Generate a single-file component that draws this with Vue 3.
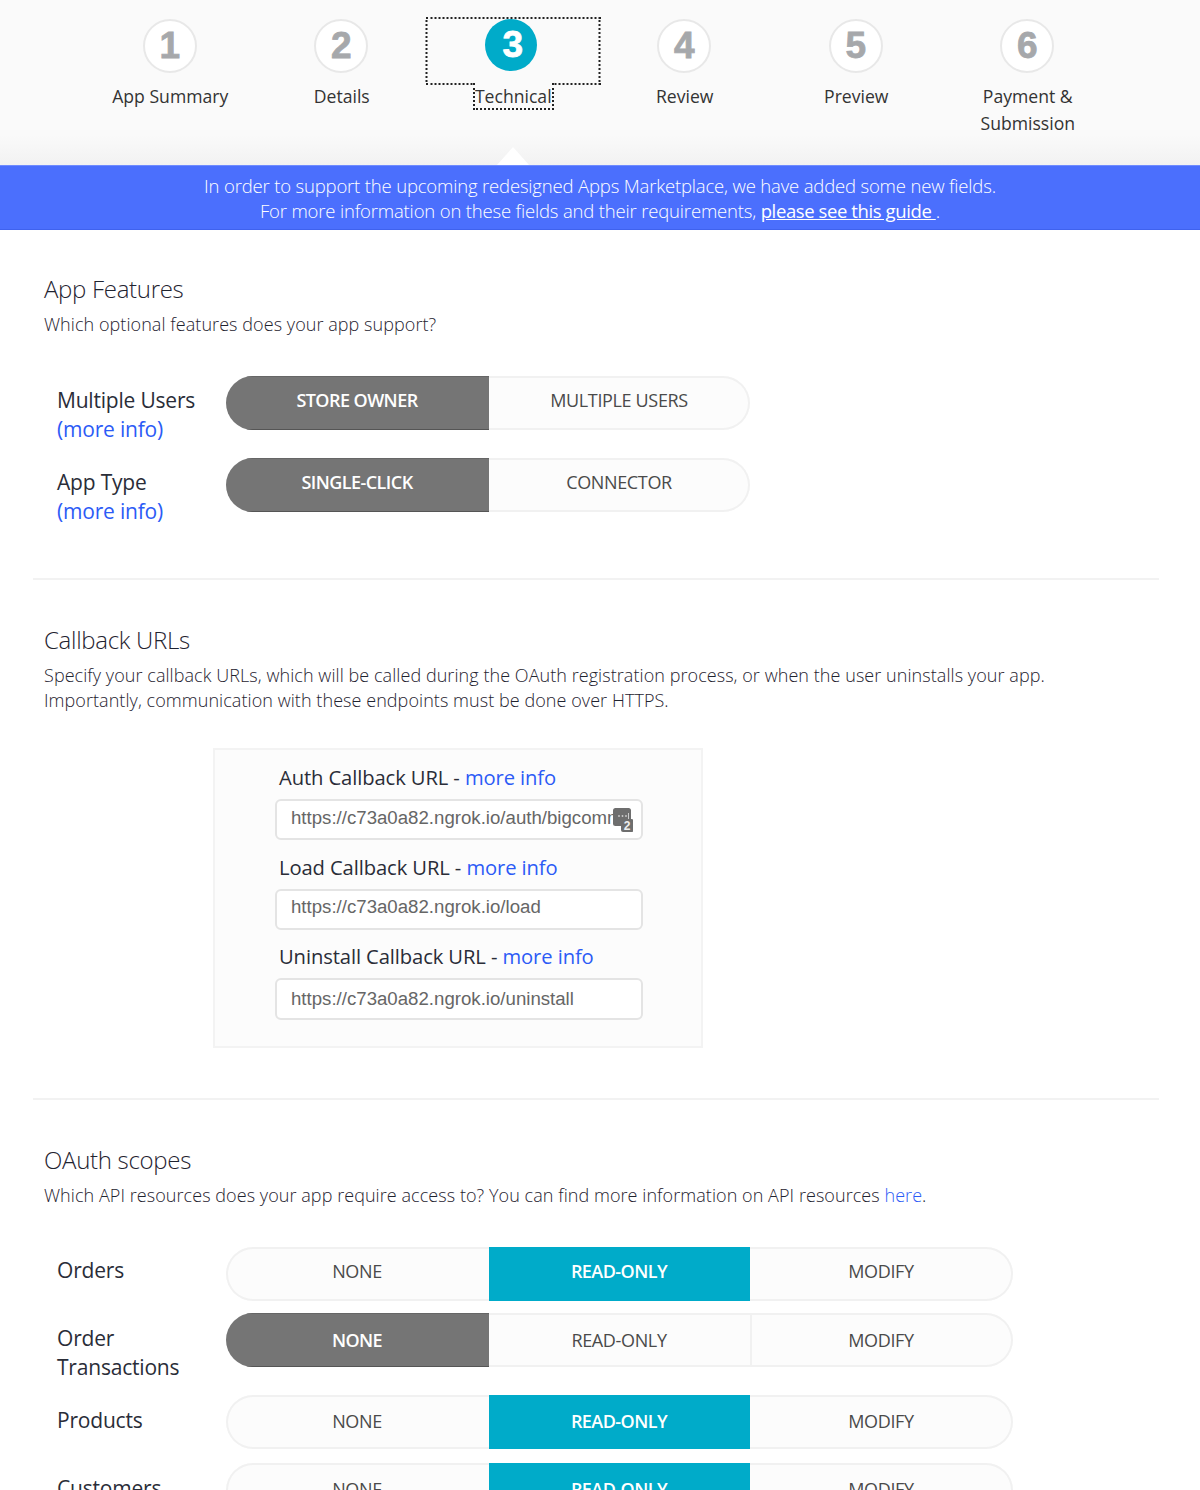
<script setup>
const steps = [
  { n: 1, label: 'App Summary' },
  { n: 2, label: 'Details' },
  { n: 3, label: 'Technical', active: true },
  { n: 4, label: 'Review' },
  { n: 5, label: 'Preview' },
  { n: 6, label: 'Payment & Submission' },
]
const features = [
  { label: 'Multiple Users', options: ['STORE OWNER', 'MULTIPLE USERS'], selected: 0, tone: 'grey' },
  { label: 'App Type', options: ['SINGLE-CLICK', 'CONNECTOR'], selected: 0, tone: 'grey' },
]
const scopeOptions = ['NONE', 'READ-ONLY', 'MODIFY']
const scopes = [
  { label: 'Orders', options: scopeOptions, selected: 1, tone: 'cyan', tight: true },
  { label: 'Order Transactions', options: scopeOptions, selected: 0, tone: 'grey', low: true },
  { label: 'Products', options: scopeOptions, selected: 1, tone: 'cyan' },
  { label: 'Customers', options: scopeOptions, selected: 1, tone: 'cyan' },
]
const urls = [
  { label: 'Auth Callback URL', value: 'https://c73a0a82.ngrok.io/auth/bigcommerce', icon: true },
  { label: 'Load Callback URL', value: 'https://c73a0a82.ngrok.io/load' },
  { label: 'Uninstall Callback URL', value: 'https://c73a0a82.ngrok.io/uninstall' },
]
</script>

<template>
  <div class="page">
    <header class="stepper">
      <div v-for="s in steps" :key="s.n" class="step" :class="{ active: s.active }">
        <div class="badge-zone">
          <span class="circle">{{ s.n }}</span>
        </div>
        <span class="step-label">{{ s.label }}</span>
      </div>
      <span class="notch"></span>
    </header>

    <div class="banner">
      <p>In order to support the upcoming redesigned Apps Marketplace, we have added some new fields.</p>
      <p>For more information on these fields and their requirements, <a class="guide">please see this guide </a>.</p>
    </div>

    <section class="section features">
      <h2>App Features</h2>
      <p class="desc">Which optional features does your app support?</p>
      <div class="rows">
        <div v-for="r in features" :key="r.label" class="row">
          <div class="row-label">
            {{ r.label }}
            <a class="link block">(more info)</a>
          </div>
          <div class="toggle">
            <span
              v-for="(o, i) in r.options"
              :key="o"
              class="seg"
              :class="i === r.selected ? 'on-' + r.tone : ''"
            >{{ o }}</span>
          </div>
        </div>
      </div>
    </section>

    <hr class="rule" />

    <section class="section callbacks">
      <h2>Callback URLs</h2>
      <p class="desc">Specify your callback URLs, which will be called during the OAuth registration process, or when the user uninstalls your app.</p>
      <p class="desc">Importantly, communication with these endpoints must be done over HTTPS.</p>
      <div class="url-box">
        <div v-for="u in urls" :key="u.label" class="url-field">
          <div class="url-label">{{ u.label }} - <a class="link">more info</a></div>
          <div class="url-input">
            <span class="url-text">{{ u.value }}</span>
            <svg v-if="u.icon" class="pw-icon" viewBox="0 0 20 24" width="20" height="24" aria-hidden="true">
              <rect x="0" y="0" width="18" height="18" rx="2.5" fill="#6e6e6e" />
              <circle cx="6" cy="8" r="0.9" fill="#ccc" />
              <circle cx="9.5" cy="8" r="0.9" fill="#ccc" />
              <circle cx="13" cy="8" r="0.9" fill="#ccc" />
              <rect x="15" y="5" width="1" height="6" fill="#ccc" />
              <rect x="8" y="11" width="12.5" height="13" rx="2" fill="#6e6e6e" />
              <text x="14.2" y="22.3" text-anchor="middle" class="pw-num">2</text>
            </svg>
          </div>
        </div>
      </div>
    </section>

    <hr class="rule" />

    <section class="section scopes">
      <h2>OAuth scopes</h2>
      <p class="desc">Which API resources does your app require access to? You can find more information on API resources <a class="link">here</a>.</p>
      <div class="rows">
        <div v-for="r in scopes" :key="r.label" class="row" :class="{ tight: r.tight, low: r.low }">
          <div class="row-label">{{ r.label }}</div>
          <div class="toggle triple">
            <span
              v-for="(o, i) in r.options"
              :key="o"
              class="seg"
              :class="i === r.selected ? 'on-' + r.tone : ''"
            >{{ o }}</span>
          </div>
        </div>
      </div>
    </section>
  </div>
</template>

<style>
html, body { margin: 0; background: #fff; }
</style>

<style scoped>
.page {
  width: 1200px;
  height: 1490px;
  overflow: hidden;
  font-family: "Open Sans", "Liberation Sans", sans-serif;
  color: #2a2d38;
  background: #fff;
}
.stepper {
  position: relative;
  display: grid;
  grid-template-columns: repeat(6, 171.5px);
  height: 165px;
  padding-left: 84px;
  background: linear-gradient(#fafafa 0, #fafafa 135px, #f2f2f2 165px);
  box-sizing: border-box;
  padding-top: 19px;
}
.step {
  display: flex;
  flex-direction: column;
  align-items: center;
  text-align: center;
}
.badge-zone { height: 54px; display: flex; align-items: flex-start; justify-content: center; }
.circle {
  width: 54px;
  height: 54px;
  box-sizing: border-box;
  border: 2px solid #e8e8e8;
  border-radius: 50%;
  background: #fff;
  display: flex;
  align-items: center;
  justify-content: center;
  font-family: "Liberation Sans", Arial, sans-serif;
  font-weight: 700;
  font-size: 37px;
  color: #a6a8ab;
  -webkit-text-stroke: 0.8px currentColor;
}
.step-label {
  width: 125px;
  margin: 10px 0 0 1px;
  font-size: 17.6px;
  line-height: 27px;
  color: #333;
}
.active .badge-zone {
  position: relative;
}
.active .badge-zone::before {
  content: "";
  position: absolute;
  left: calc(50% + 0.5px);
  top: -2px;
  width: 175px;
  height: 68px;
  transform: translateX(-50%);
  box-sizing: border-box;
  border: 2px dotted #222;
}
.active .circle {
  width: 52px;
  height: 52px;
  border: none;
  background: #00abc9;
  color: #fff;
  position: relative;
  margin-left: -4px;
  padding-left: 4px;
}
.active .step-label {
  width: auto;
  position: relative;
  z-index: 1;
  padding: 1px 0 0;
  background: #fafafa;
  border: 2px dotted #222;
  border-top: none;
  line-height: 24px;
  margin-top: 10px;
}
.notch {
  position: absolute;
  left: 497px;
  bottom: 0;
  width: 0;
  height: 0;
  border-left: 16px solid transparent;
  border-right: 16px solid transparent;
  border-bottom: 18px solid #fff;
}
.banner {
  height: 65px;
  box-sizing: border-box;
  padding-top: 8px;
  background: #4b6ffd;
  box-shadow: inset 0 1px 0 #6f8cff, inset 0 -1px 0 #3f62ee;
  color: #fff;
  text-align: center;
  font-size: 18.5px;
  font-weight: 300;
  line-height: 25px;
  letter-spacing: -0.17px;
}
.banner p { margin: 0; }
.guide { text-decoration: underline; font-weight: 400; letter-spacing: -0.4px; }
.section { padding-left: 44px; }
h2 {
  margin: 0;
  font-size: 24px;
  font-weight: 300;
  line-height: 36px;
  color: #1f2330;
  letter-spacing: -0.3px;
}
.desc {
  margin: 0;
  font-size: 18px;
  font-weight: 300;
  line-height: 25px;
  letter-spacing: 0.06px;
  color: #1f2330;
}
h2 + .desc { margin-top: 5px; }
.rows { margin-top: 39px; margin-left: 13px; }
.row {
  display: grid;
  grid-template-columns: 169px auto;
  justify-content: start;
  align-items: start;
  margin-bottom: 14px;
}
.row.tight { margin-bottom: 12px; }
.row-label {
  padding-top: 10px;
  font-size: 21px;
  line-height: 29px;
  letter-spacing: -0.2px;
  box-sizing: border-box;
  color: #2a2d38;
}
.scopes .row-label { padding-top: 11px; margin-bottom: -1px; }
.scopes .tight .row-label { padding-top: 9px; margin-bottom: 0; }
.link { color: #2c5bf6; }
.block { display: block; }
.toggle {
  display: grid;
  grid-template-columns: 263px 261px;
  height: 54px;
  box-sizing: border-box;
  border-radius: 27px;
  overflow: hidden;
  box-shadow: inset 0 0 0 2px #f1f1f1;
  background: #fcfcfc;
}
.toggle.triple { grid-template-columns: 263px 261px 263px; }
.seg {
  display: flex;
  align-items: center;
  justify-content: center;
  padding: 0 1px 7px 0;
  box-sizing: border-box;
  font-size: 18px;
  letter-spacing: -0.35px;
  color: #4a4a4a;
}
.scopes .row:not(.tight) .seg { padding-bottom: 3px; }
.scopes .row.low .seg { padding-bottom: 1px; }
.triple .seg:not([class*="on-"]) + .seg:last-child { box-shadow: inset 2px 0 0 #f1f1f1; }
.on-grey { background: #757575; color: #fff; box-shadow: inset 0 1px 0 #666, inset 0 -1px 0 #555; font-weight: 600; letter-spacing: -0.55px; }
.on-cyan { background: #00abc9; color: #fff; font-weight: 600; letter-spacing: -0.55px; }
.rule {
  margin: 0 41px 0 33px;
  border: none;
  height: 2px;
  background: #f2f2f2;
}
.features { height: 348px; box-sizing: border-box; padding-top: 41px; }
.callbacks { height: 518px; box-sizing: border-box; padding-top: 42px; }
.scopes { padding-top: 42px; }
.url-box {
  margin: 35px 0 0 169px;
  width: 490px;
  height: 300px;
  box-sizing: border-box;
  border: 2px solid #f3f3f3;
  background: #fcfcfc;
  padding: 13px 0 0 60px;
}
.url-field { height: 89.5px; }
.url-label {
  font-size: 20.2px;
  line-height: 28px;
  padding-left: 4px;
  letter-spacing: -0.1px;
  color: #2a2d38;
}
.url-input {
  position: relative;
  margin-top: 8px;
  width: 368px;
  height: 41px;
  box-sizing: border-box;
  border: 2px solid #e4e4e4;
  border-radius: 6px;
  background: #fff;
  padding: 0 10px 4px 14px;
  display: flex;
  align-items: center;
  overflow: hidden;
}
.url-field:last-child .url-input { height: 42px; padding-bottom: 1px; }
.url-text {
  font-family: "Liberation Sans", Arial, sans-serif;
  font-size: 18.65px;
  color: #666;
  white-space: nowrap;
  overflow: hidden;
}
.pw-icon { position: absolute; left: 336px; top: 7px; }
.pw-num {
  font-family: "Liberation Sans", Arial, sans-serif;
  font-size: 12px;
  font-weight: 700;
  fill: #eee;
}
</style>
